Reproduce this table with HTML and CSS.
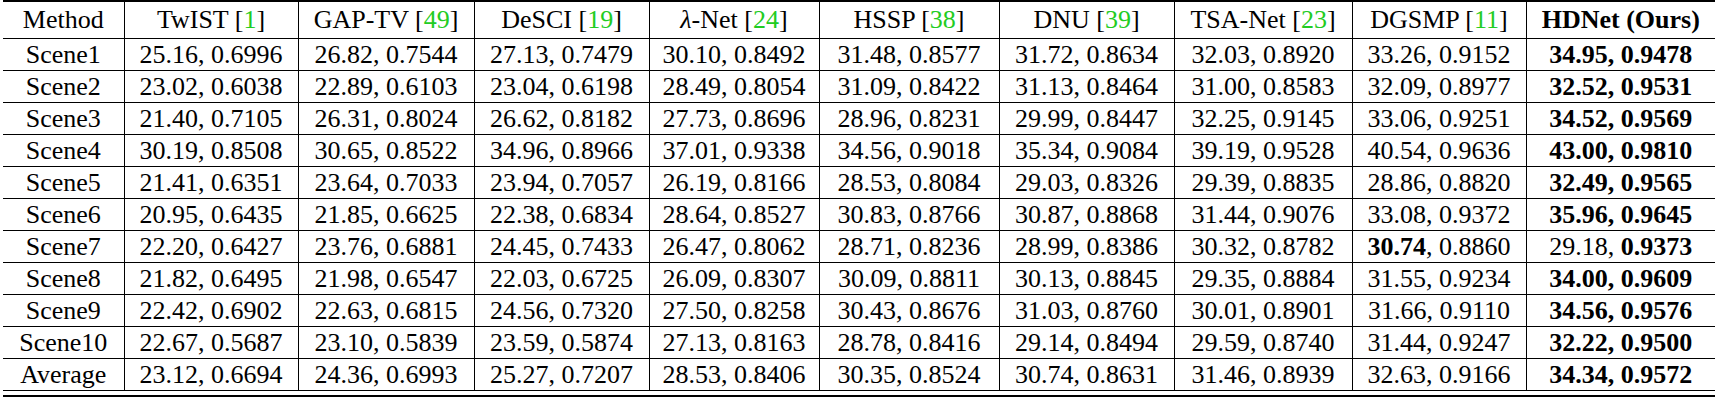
FILE: index.html
```html
<!DOCTYPE html>
<html lang="en">
<head>
    <meta charset="UTF-8">
    <title>Results</title>
    <link rel="stylesheet" href="styles.css">
</head>
<body>
    <div class="table-wrap">
        <table class="results">
            <colgroup>
                <col class="c-method">
                <col class="c-twist">
                <col class="c-gaptv">
                <col class="c-desci">
                <col class="c-lambda">
                <col class="c-hssp">
                <col class="c-dnu">
                <col class="c-tsa">
                <col class="c-dgsmp">
                <col class="c-ours">
            </colgroup>
            <thead>
                <tr>
                    <th>Method</th>
                    <th>TwIST [<span class="cite">1</span>]</th>
                    <th>GAP-TV [<span class="cite">49</span>]</th>
                    <th>DeSCI [<span class="cite">19</span>]</th>
                    <th><i>λ</i>-Net [<span class="cite">24</span>]</th>
                    <th>HSSP [<span class="cite">38</span>]</th>
                    <th>DNU [<span class="cite">39</span>]</th>
                    <th>TSA-Net [<span class="cite">23</span>]</th>
                    <th>DGSMP [<span class="cite">11</span>]</th>
                    <th><b>HDNet (Ours)</b></th>
                </tr>
            </thead>
            <tbody>
                <tr><td>Scene1</td><td>25.16, 0.6996</td><td>26.82, 0.7544</td><td>27.13, 0.7479</td><td>30.10, 0.8492</td><td>31.48, 0.8577</td><td>31.72, 0.8634</td><td>32.03, 0.8920</td><td>33.26, 0.9152</td><td><b>34.95, 0.9478</b></td></tr>
                <tr><td>Scene2</td><td>23.02, 0.6038</td><td>22.89, 0.6103</td><td>23.04, 0.6198</td><td>28.49, 0.8054</td><td>31.09, 0.8422</td><td>31.13, 0.8464</td><td>31.00, 0.8583</td><td>32.09, 0.8977</td><td><b>32.52, 0.9531</b></td></tr>
                <tr><td>Scene3</td><td>21.40, 0.7105</td><td>26.31, 0.8024</td><td>26.62, 0.8182</td><td>27.73, 0.8696</td><td>28.96, 0.8231</td><td>29.99, 0.8447</td><td>32.25, 0.9145</td><td>33.06, 0.9251</td><td><b>34.52, 0.9569</b></td></tr>
                <tr><td>Scene4</td><td>30.19, 0.8508</td><td>30.65, 0.8522</td><td>34.96, 0.8966</td><td>37.01, 0.9338</td><td>34.56, 0.9018</td><td>35.34, 0.9084</td><td>39.19, 0.9528</td><td>40.54, 0.9636</td><td><b>43.00, 0.9810</b></td></tr>
                <tr><td>Scene5</td><td>21.41, 0.6351</td><td>23.64, 0.7033</td><td>23.94, 0.7057</td><td>26.19, 0.8166</td><td>28.53, 0.8084</td><td>29.03, 0.8326</td><td>29.39, 0.8835</td><td>28.86, 0.8820</td><td><b>32.49, 0.9565</b></td></tr>
                <tr><td>Scene6</td><td>20.95, 0.6435</td><td>21.85, 0.6625</td><td>22.38, 0.6834</td><td>28.64, 0.8527</td><td>30.83, 0.8766</td><td>30.87, 0.8868</td><td>31.44, 0.9076</td><td>33.08, 0.9372</td><td><b>35.96, 0.9645</b></td></tr>
                <tr><td>Scene7</td><td>22.20, 0.6427</td><td>23.76, 0.6881</td><td>24.45, 0.7433</td><td>26.47, 0.8062</td><td>28.71, 0.8236</td><td>28.99, 0.8386</td><td>30.32, 0.8782</td><td><b>30.74</b>, 0.8860</td><td>29.18, <b>0.9373</b></td></tr>
                <tr><td>Scene8</td><td>21.82, 0.6495</td><td>21.98, 0.6547</td><td>22.03, 0.6725</td><td>26.09, 0.8307</td><td>30.09, 0.8811</td><td>30.13, 0.8845</td><td>29.35, 0.8884</td><td>31.55, 0.9234</td><td><b>34.00, 0.9609</b></td></tr>
                <tr><td>Scene9</td><td>22.42, 0.6902</td><td>22.63, 0.6815</td><td>24.56, 0.7320</td><td>27.50, 0.8258</td><td>30.43, 0.8676</td><td>31.03, 0.8760</td><td>30.01, 0.8901</td><td>31.66, 0.9110</td><td><b>34.56, 0.9576</b></td></tr>
                <tr><td>Scene10</td><td>22.67, 0.5687</td><td>23.10, 0.5839</td><td>23.59, 0.5874</td><td>27.13, 0.8163</td><td>28.78, 0.8416</td><td>29.14, 0.8494</td><td>29.59, 0.8740</td><td>31.44, 0.9247</td><td><b>32.22, 0.9500</b></td></tr>
                <tr><td>Average</td><td>23.12, 0.6694</td><td>24.36, 0.6993</td><td>25.27, 0.7207</td><td>28.53, 0.8406</td><td>30.35, 0.8524</td><td>30.74, 0.8631</td><td>31.46, 0.8939</td><td>32.63, 0.9166</td><td><b>34.34, 0.9572</b></td></tr>
            </tbody>
        </table>
    </div>
</body>
</html>
```

FILE: styles.css
```css
body {
    margin: 0;
    padding: 0;
    background-color: #ffffff;
    color: #000000;
    font-family: "Liberation Serif", "Times New Roman", serif;
}

.table-wrap {
    width: 1712px;
    margin-left: 3px;
    border-top: 2px solid #000000;
    border-bottom: 2px solid #000000;
    padding-bottom: 4px;
}

.results {
    width: 100%;
    border-collapse: collapse;
    table-layout: fixed;
    font-size: 26px;
}

.c-method { width: 121px; }
.c-twist  { width: 174px; }
.c-gaptv  { width: 176px; }
.c-desci  { width: 175px; }
.c-lambda { width: 170px; }
.c-hssp   { width: 180px; }
.c-dnu    { width: 175px; }
.c-tsa    { width: 178px; }
.c-dgsmp  { width: 174px; }
.c-ours   { width: 189px; }

.results th,
.results td {
    padding: 0;
    text-align: center;
    vertical-align: middle;
    white-space: nowrap;
    font-weight: normal;
    border-bottom: 1px solid #000000;
    border-left: 1px solid #000000;
    line-height: 31px;
}

.results th:first-child,
.results td:first-child {
    border-left: none;
}

.results thead tr {
    height: 36px;
}

.results thead th {
    line-height: 35px;
}

.results tbody tr {
    height: 32px;
}

.results b {
    font-weight: bold;
}

.cite {
    color: #22cc22;
}
```
